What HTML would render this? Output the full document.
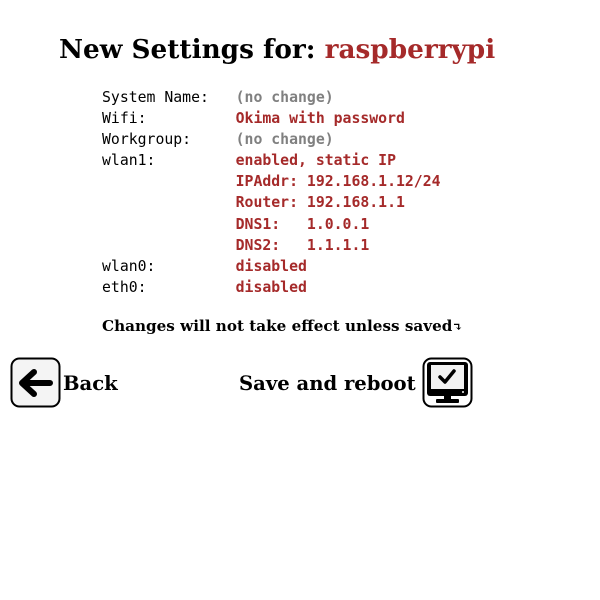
<!DOCTYPE html>
<html><head><style>
body{margin:0;width:600px;height:600px;background:#fff;position:relative;overflow:hidden}
.a{position:absolute;white-space:pre}
.s{font-family:"DejaVu Serif","Liberation Serif",serif;font-weight:bold;color:#000}
.m{font-family:"DejaVu Sans Mono","Liberation Mono",monospace;font-size:14.8px;line-height:21.1px}
.r{color:#a52a2a;font-weight:bold}
.g{color:#808080;font-weight:bold}
</style></head><body>
<div class="a s" style="left:59px;top:33px;font-size:26.3px;line-height:34px">New Settings for: <span style="color:#a52a2a">raspberrypi</span></div>
<div class="a m" style="left:102px;top:87px">System Name:   <span class="g">(no change)</span>
Wifi:          <span class="r">Okima with password</span>
Workgroup:     <span class="g">(no change)</span>
wlan1:         <span class="r">enabled, static IP</span>
               <span class="r">IPAddr: 192.168.1.12/24</span>
               <span class="r">Router: 192.168.1.1</span>
               <span class="r">DNS1:   1.0.0.1</span>
               <span class="r">DNS2:   1.1.1.1</span>
wlan0:         <span class="r">disabled</span>
eth0:          <span class="r">disabled</span></div>
<div class="a s" style="left:102px;top:316px;font-size:15.2px;line-height:20px">Changes will not take effect unless saved<span style="font-size:12px">↴</span></div>
<svg class="a" style="left:10px;top:357px" width="51" height="51" viewBox="0 0 51 51">
<rect x="1.5" y="1.5" width="48" height="48" rx="8" fill="#f4f4f4" stroke="#000" stroke-width="2"/>
<path d="M40 26H14M24 15L12 26L24 37" fill="none" stroke="#000" stroke-width="6" stroke-linecap="round" stroke-linejoin="round"/>
</svg>
<div class="a s" style="left:63px;top:371px;font-size:19.6px;line-height:26px">Back</div>
<div class="a s" style="left:239px;top:371px;font-size:19.6px;line-height:26px">Save and reboot</div>
<svg class="a" style="left:422px;top:357px" width="51" height="51" viewBox="0 0 51 51">
<rect x="1.5" y="1.5" width="48" height="48" rx="8" fill="#fff" stroke="#000" stroke-width="2"/>
<rect x="5" y="5" width="41" height="34" rx="3" fill="#000"/>
<rect x="9" y="8" width="33" height="24" fill="#f2f2f2"/>
<circle cx="41" cy="35" r="1" fill="#fff"/>
<rect x="22" y="39" width="7" height="4" fill="#000"/>
<rect x="14" y="42" width="23" height="4" rx="1" fill="#000"/>
<path d="M18 20L23 25L32 14" fill="none" stroke="#000" stroke-width="3.5" stroke-linecap="round" stroke-linejoin="round"/>
</svg>
</body></html>
